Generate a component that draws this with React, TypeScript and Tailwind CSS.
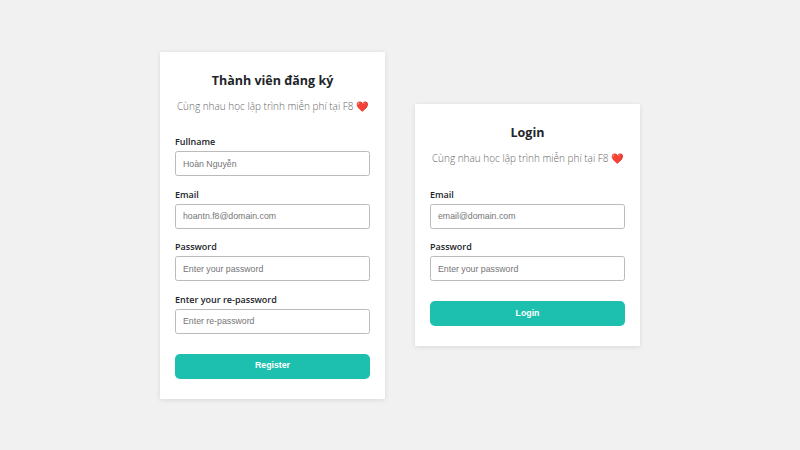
function Field({ label, placeholder }: { label: string; placeholder: string }) {
  return (
    <div className="mb-[11.5px]">
      <label className="block font-['Open_Sans',sans-serif] font-semibold text-[9px] leading-[13px] text-[#212529] mb-[3px]">
        {label}
      </label>
      <input
        placeholder={placeholder}
        className="block w-full h-[25px] px-[7px] border border-[#bbb] rounded-[2.5px] bg-white font-['Liberation_Sans',sans-serif] text-[8.75px] text-[#333] placeholder:text-[#757575] outline-none"
      />
    </div>
  )
}

function Card({ title, button, fields }: { title: string; button: string; fields: { label: string; placeholder: string }[] }) {
  return (
    <form className="w-[225px] bg-white rounded-[1px] px-[15px] pt-[20px] pb-[20px] shadow-[0_1px_5px_rgba(0,0,0,0.1)]">
      <h3 className="text-center font-['Open_Sans',sans-serif] font-bold text-[12.5px] leading-[18px] text-[#212529]">
        {title}
      </h3>
      <p className="mt-[7px] mb-[20.5px] text-center font-['Open_Sans',sans-serif] font-light text-[10px] leading-[18px] text-[#666]">
        Cùng nhau học lập trình miễn phí tại F8 ❤️
      </p>
      {fields.map((f) => (
        <Field key={f.label} label={f.label} placeholder={f.placeholder} />
      ))}
      <button
        type="button"
        className="block w-full h-[25px] mt-[20px] rounded-[5px] bg-[#1dbfaf] text-white font-['Liberation_Sans',sans-serif] font-bold text-[8.75px]"
      >
        {button}
      </button>
    </form>
  )
}

export default function App() {
  return (
    <div className="h-[450px] bg-[#f1f1f1] flex items-center justify-center gap-[30px]">
      <Card
        title="Thành viên đăng ký"
        button="Register"
        fields={[
          { label: 'Fullname', placeholder: 'Hoàn Nguyễn' },
          { label: 'Email', placeholder: 'hoantn.f8@domain.com' },
          { label: 'Password', placeholder: 'Enter your password' },
          { label: 'Enter your re-password', placeholder: 'Enter re-password' },
        ]}
      />
      <Card
        title="Login"
        button="Login"
        fields={[
          { label: 'Email', placeholder: 'email@domain.com' },
          { label: 'Password', placeholder: 'Enter your password' },
        ]}
      />
    </div>
  )
}
